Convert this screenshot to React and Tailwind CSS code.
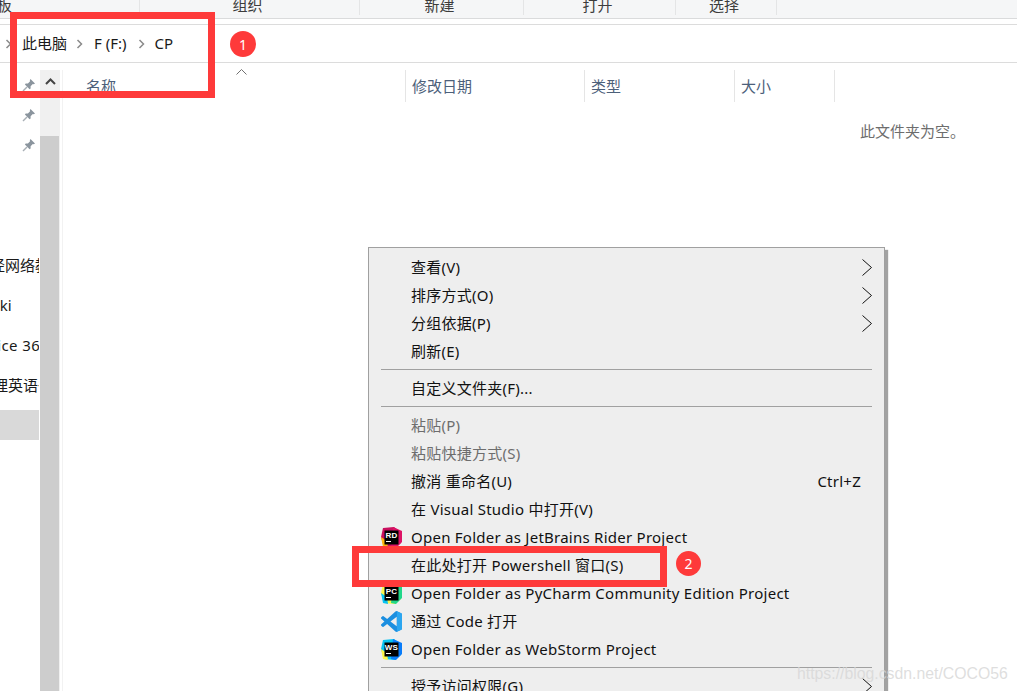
const FONT = 'font-["Noto_Sans","Noto_Sans_CJK_SC",sans-serif]';

const RIBBON = [
  { label: '组织', width: 'w-[220px]' },
  { label: '新建', width: 'w-[164px]' },
  { label: '打开', width: 'w-[152px]' },
  { label: '选择', width: 'w-[101px]' },
];

const COLUMNS = [
  { label: '修改日期', width: 'w-[179px]' },
  { label: '类型', width: 'w-[150px]' },
  { label: '大小', width: 'w-[100px]' },
];

const MENU = [
  [
    { label: '查看(V)', arrow: true },
    { label: '排序方式(O)', arrow: true },
    { label: '分组依据(P)', arrow: true },
    { label: '刷新(E)' },
  ],
  [{ label: '自定义文件夹(F)...' }],
  [
    { label: '粘贴(P)', disabled: true },
    { label: '粘贴快捷方式(S)', disabled: true },
    { label: '撤消 重命名(U)', shortcut: 'Ctrl+Z' },
    { label: '在 Visual Studio 中打开(V)' },
    { label: 'Open Folder as JetBrains Rider Project', icon: 'rider' },
    { label: '在此处打开 Powershell 窗口(S)' },
    { label: 'Open Folder as PyCharm Community Edition Project', icon: 'pycharm' },
    { label: '通过 Code 打开', icon: 'vscode' },
    { label: 'Open Folder as WebStorm Project', icon: 'webstorm' },
  ],
  [{ label: '授予访问权限(G)', arrow: true }],
];

function Crumb() {
  return (
    <svg width="7" height="10" viewBox="0 0 7 10" className="shrink-0">
      <path d="M1.5 1 L5.5 5 L1.5 9" fill="none" stroke="#8a8a8a" strokeWidth="1.5" />
    </svg>
  );
}

function Pin() {
  return (
    <svg width="14" height="14" viewBox="0 0 14 14">
      <path d="M8.5 1 L13 5.5 L11.8 6.2 L10.8 6 L8.6 8.2 L8.6 10.4 L7.6 11.2 L2.9 6.5 L3.7 5.5 L5.9 5.5 L8.1 3.3 L7.8 2.2 Z" fill="#8b959e" />
      <path d="M5 9 L1 13" stroke="#a9b0b6" strokeWidth="1.4" />
    </svg>
  );
}

function JetBrainsIcon({ tag, colors }) {
  return (
    <svg width="21" height="21" viewBox="0 0 21 21">
      <polygon points="2,1 13,0 21,6 20,16 14,21 3,20 0,10" fill={colors[0]} />
      <polygon points="12,0 21,4 21,15 15,21 10,20" fill={colors[1]} />
      <polygon points="0,10 6,14 7,21 2,20" fill={colors[2]} />
      <rect x="3.5" y="3.5" width="14" height="14" fill="#000" />
      <text x="10.5" y="11" textAnchor="middle" fontSize="8" fontWeight="700" fill="#fff" fontFamily="Liberation Sans, sans-serif">{tag}</text>
      <rect x="5" y="14" width="5" height="1" fill="#fff" />
    </svg>
  );
}

function MenuIcon({ name }) {
  if (name === 'rider') return <JetBrainsIcon tag="RD" colors={['#c90f5e', '#dd1265', '#fdb60d']} />;
  if (name === 'pycharm') return <JetBrainsIcon tag="PC" colors={['#fcf84a', '#21d789', '#07c3f2']} />;
  if (name === 'webstorm') return <JetBrainsIcon tag="WS" colors={['#07c3f2', '#087cfa', '#fcf84a']} />;
  return (
    <svg width="21" height="21" viewBox="0 0 24 24">
      <path d="M23.15 2.587L18.21.21a1.494 1.494 0 0 0-1.705.29l-9.46 8.63-4.12-3.128a.999.999 0 0 0-1.276.057L.327 7.261A1 1 0 0 0 .326 8.74L3.899 12 .326 15.26a1 1 0 0 0 .001 1.479L1.65 17.94a.999.999 0 0 0 1.276.057l4.12-3.128 9.46 8.63a1.492 1.492 0 0 0 1.704.29l4.942-2.377A1.5 1.5 0 0 0 24 20.06V3.939a1.5 1.5 0 0 0-.85-1.352zm-5.146 14.861L10.826 12l7.178-5.448v10.896z" fill="#1c8fe0" />
      <path d="M18.2 0.2 L23.15 2.587 A1.5 1.5 0 0 1 24 3.939 V20.06 A1.5 1.5 0 0 1 23.15 21.41 L18.2 23.8 Z" fill="#2ba6f0" />
    </svg>
  );
}

function MenuRow({ item }) {
  return (
    <div className={`flex h-7 items-center pl-3 pr-3 text-[15px] tracking-[0.25px] whitespace-nowrap ${item.disabled ? 'text-[#6d6d6d]' : 'text-[#111]'}`}>
      <div className="flex w-[30px] shrink-0 items-center">
        {item.icon && <MenuIcon name={item.icon} />}
      </div>
      <span>{item.label}</span>
      {item.shortcut && <span className="ml-auto mr-[11px]">{item.shortcut}</span>}
      {item.arrow && (
        <svg width="10" height="17" viewBox="0 0 10 17" className="ml-auto">
          <path d="M0.5 0.5 L9.5 8.5 L0.5 16.5" fill="none" stroke="#111" strokeWidth="1" />
        </svg>
      )}
    </div>
  );
}

function ContextMenu() {
  return (
    <div className="absolute left-[368px] top-[247px] w-[517px] border border-[#a0a0a0] bg-[#eeeeee] pt-[5px] shadow-[3px_3px_1px_#a2a2a2]">
      {MENU.map((group, i) => (
        <div key={i}>
          {i > 0 && <div className="mx-3 my-1 h-px bg-[#a0a0a0]" />}
          {group.map((item) => (
            <MenuRow key={item.label} item={item} />
          ))}
        </div>
      ))}
    </div>
  );
}

function Sidebar() {
  const rows = [
    { text: '神经网络教程', cls: '-ml-[25px]' },
    { text: 'Wiki', cls: '-ml-[18px]' },
    { text: 'Office 365', cls: '-ml-[26px] tracking-[0.4px]' },
    { text: '管理英语备', cls: '-ml-[22px]' },
  ];
  return (
    <div className="w-10 shrink-0 overflow-hidden pt-[7px]">
      {[0, 1, 2].map((i) => (
        <div key={i} className="flex h-[30px] items-center pl-[22px]">
          <Pin />
        </div>
      ))}
      <div className="mt-[90px] flex flex-col gap-2.5">
        {rows.map((r) => (
          <div key={r.text} className="flex h-[30px] w-[39px] items-center overflow-hidden text-[15px] whitespace-nowrap text-[#1a1a1a]">
            <span className={r.cls}>{r.text}</span>
          </div>
        ))}
        <div className="h-[30px] w-[39px] bg-[#d9d9d9]" />
      </div>
    </div>
  );
}

function Scrollbar() {
  return (
    <div className="mt-[7px] flex w-5 shrink-0 flex-col bg-[#f0f0f0]">
      <div className="flex h-[66px] justify-center pt-2">
        <svg width="11" height="7" viewBox="0 0 11 7">
          <path d="M1 6 L5.5 1.5 L10 6" fill="none" stroke="#444" strokeWidth="2" />
        </svg>
      </div>
      <div className="mr-px flex-1 bg-[#cdcdcd]" />
    </div>
  );
}

export default function App() {
  return (
    <div className={`relative flex h-[691px] w-[1017px] flex-col overflow-hidden bg-white ${FONT}`}>
      <div className="flex h-[19px] shrink-0 overflow-hidden border-b border-[#dadbdc] bg-[#f5f6f7] text-[15px] leading-5 text-[#3c3c3c]">
        <div className="h-[15px] w-[140px] border-r border-[#e4e5e6]">
          <div className="-ml-[3px] -mt-[5px]">板</div>
        </div>
        {RIBBON.map((r) => (
          <div key={r.label} className={`h-[15px] ${r.width} border-r border-[#e4e5e6] pr-1 text-center`}>
            <div className="-mt-[5px]">{r.label}</div>
          </div>
        ))}
      </div>

      <div className="mt-[5px] flex h-[39px] shrink-0 items-center border-y border-[#dcdcdc] pl-[5px] text-[15px] text-[#1a1a1a]">
        <Crumb />
        <span className="ml-2.5">此电脑</span>
        <span className="ml-[9px]"><Crumb /></span>
        <span className="ml-[11px]">F (F:)</span>
        <span className="ml-[11px]"><Crumb /></span>
        <span className="ml-[10px]">CP</span>
      </div>

      <div className="flex min-h-0 flex-1">
        <Sidebar />
        <Scrollbar />
        <div className="mt-[7px] ml-0.5 w-px shrink-0 bg-[#f2f2f2]" />

        <div className="flex-1">
          <div className="relative mt-[7px] flex h-8 text-[15px] text-[#4c607a]">
            <div className="flex w-[343px] items-center justify-between border-r border-[#e5e5e5] pl-[23px]">
              <span className="mt-px">名称</span>
            </div>
            {COLUMNS.map((c) => (
              <div key={c.label} className={`flex ${c.width} items-center border-r border-[#e5e5e5] pl-1.5`}>
                <span className="mt-px">{c.label}</span>
              </div>
            ))}
            <svg width="11" height="6" viewBox="0 0 11 6" className="absolute left-[173px] -top-px">
              <path d="M0.5 5.5 L5.5 0.5 L10.5 5.5" fill="none" stroke="#707070" strokeWidth="1" />
            </svg>
          </div>
          <div className="mt-[18px] pl-[797px] text-[15px] whitespace-nowrap text-[#6d6d6d]">
            此文件夹为空。
          </div>
        </div>
      </div>

      <ContextMenu />

      <div className="absolute left-2.5 top-3 h-[86px] w-[205px] border-[7px] border-[#fe3a3a]" />
      <div className="absolute left-[230px] top-[31px] flex h-[26px] w-[26px] items-center justify-center rounded-full bg-[#fe3a3a] text-[14px] text-white">1</div>
      <div className="absolute left-[352px] top-[546px] h-[41px] w-[315px] border-[7px] border-[#fe3a3a]" />
      <div className="absolute left-[676px] top-[551px] flex h-[25px] w-[25px] items-center justify-center rounded-full bg-[#fe3a3a] text-[14px] text-white">2</div>

      <div className="absolute left-[797px] top-[662px] font-['Liberation_Sans',sans-serif] text-[15.8px] text-[#d6d6d6]/80">
        https://blog.csdn.net/COCO56
      </div>
    </div>
  );
}
